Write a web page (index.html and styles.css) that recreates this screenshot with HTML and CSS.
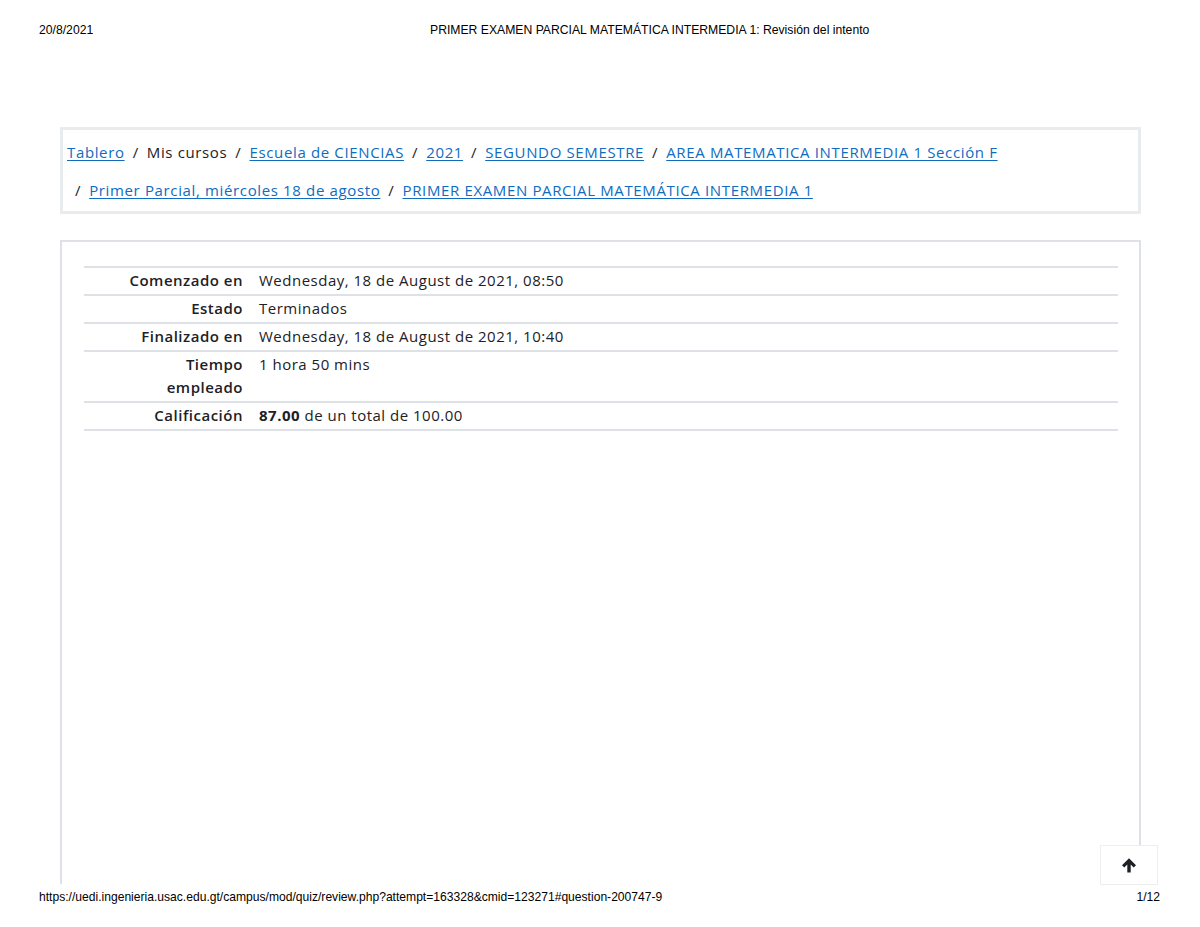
FILE: index.html
```html
<!DOCTYPE html>
<html lang="es">
<head>
<meta charset="utf-8">
<title>PRIMER EXAMEN PARCIAL MATEMÁTICA INTERMEDIA 1: Revisión del intento</title>
<link rel="stylesheet" href="styles.css">
</head>
<body>
<div class="page">
  <header class="print-head">
    <span class="ph-date">20/8/2021</span>
    <span class="ph-title">PRIMER EXAMEN PARCIAL MATEMÁTICA INTERMEDIA 1: Revisión del intento</span>
  </header>

  <nav class="crumbs">
    <ol class="crumb-list">
      <li class="crumb"><a href="#">Tablero</a></li>
      <li class="crumb">Mis cursos</li>
      <li class="crumb"><a href="#">Escuela de CIENCIAS</a></li>
      <li class="crumb"><a href="#">2021</a></li>
      <li class="crumb"><a href="#">SEGUNDO SEMESTRE</a></li>
      <li class="crumb"><a href="#">AREA MATEMATICA INTERMEDIA 1 Sección F</a></li>
      <li class="crumb-break" aria-hidden="true"></li>
      <li class="crumb"><a href="#">Primer Parcial, miércoles 18 de agosto</a></li>
      <li class="crumb"><a href="#">PRIMER EXAMEN PARCIAL MATEMÁTICA INTERMEDIA 1</a></li>
    </ol>
  </nav>

  <main class="main-box">
    <table class="summary">
      <tbody>
        <tr><th>Comenzado en</th><td>Wednesday, 18 de August de 2021, 08:50</td></tr>
        <tr><th>Estado</th><td>Terminados</td></tr>
        <tr><th>Finalizado en</th><td>Wednesday, 18 de August de 2021, 10:40</td></tr>
        <tr><th>Tiempo<br>empleado</th><td>1 hora 50 mins</td></tr>
        <tr><th>Calificación</th><td><b>87.00</b> de un total de 100.00</td></tr>
      </tbody>
    </table>
    <a class="to-top" href="#" aria-label="Ir arriba">
      <svg width="16" height="17" viewBox="0 0 16 17"><path d="M8 1.2 L15 8.2 L12.7 10.5 L9.7 7.5 V15.5 H6.3 V7.5 L3.3 10.5 L1 8.2 Z" fill="#1d2125"/></svg>
    </a>
  </main>

  <footer class="print-foot">
    <span>https://uedi.ingenieria.usac.edu.gt/campus/mod/quiz/review.php?attempt=163328&amp;cmid=123271#question-200747-9</span>
    <span>1/12</span>
  </footer>
</div>
</body>
</html>
```

FILE: styles.css
```css
* { box-sizing: border-box; }
html, body { margin: 0; padding: 0; background: #fff; }
body { width: 1200px; height: 927px; overflow: hidden; }

.page { width: 1200px; height: 927px; display: flex; flex-direction: column; }

.print-head {
  height: 60px;
  display: grid;
  grid-template-columns: 391px auto;
  padding: 23px 0 0 39px;
  font-family: "Liberation Sans", Arial, sans-serif;
  font-size: 12.2px;
  color: #000;
  line-height: 14px;
}

.crumbs {
  margin: 67px 59px 0 60px;
  border: 3px solid #e9ecef;
  padding: 3px 4px 2px 4px;
  font-family: "Open Sans", "Noto Sans", sans-serif;
  font-size: 15px;
  letter-spacing: 0.64px;
  color: #1d2125;
}
.crumb-list {
  list-style: none;
  margin: 0;
  padding: 0;
  display: flex;
  flex-wrap: wrap;
  line-height: 38px;
}
.crumb-break { flex-basis: 100%; height: 0; }
.crumb:not(:first-child) { padding-left: 8px; }
.crumb:not(:first-child)::before { content: "/"; padding-right: 8px; color: #1d2125; }
.crumb a { color: #0f6cbf; text-decoration: underline; text-underline-offset: 2px; }

.main-box {
  position: relative;
  margin: 26px 59px 0 60px;
  height: 644px;
  border: 2px solid #dee2e6;
  border-bottom: none;
  padding: 24px 21px 0 22px;
  font-family: "Open Sans", "Noto Sans", sans-serif;
  font-size: 15px;
  letter-spacing: 0.5px;
  color: #1d2125;
}
.summary { width: 100%; border-collapse: collapse; border-bottom: 2px solid #dee2e6; }
.summary th, .summary td {
  border-top: 2px solid #dee2e6;
  padding: 1px 8px 2px 8px;
  line-height: 23px;
  vertical-align: top;
}
.summary th { width: 167px; text-align: right; font-weight: 600; }
.summary td { text-align: left; font-weight: 400; }
.summary td b { font-weight: 700; }

.to-top {
  position: absolute;
  right: -19px;
  bottom: -1px;
  width: 58px;
  height: 40px;
  background: #fff;
  border: 1px solid #eeeeee;
  display: flex;
  align-items: center;
  justify-content: center;
}

.print-foot {
  display: flex;
  justify-content: space-between;
  padding: 6px 40px 0 39px;
  font-family: "Liberation Sans", Arial, sans-serif;
  font-size: 12.1px;
  line-height: 14px;
  color: #000;
}
```
